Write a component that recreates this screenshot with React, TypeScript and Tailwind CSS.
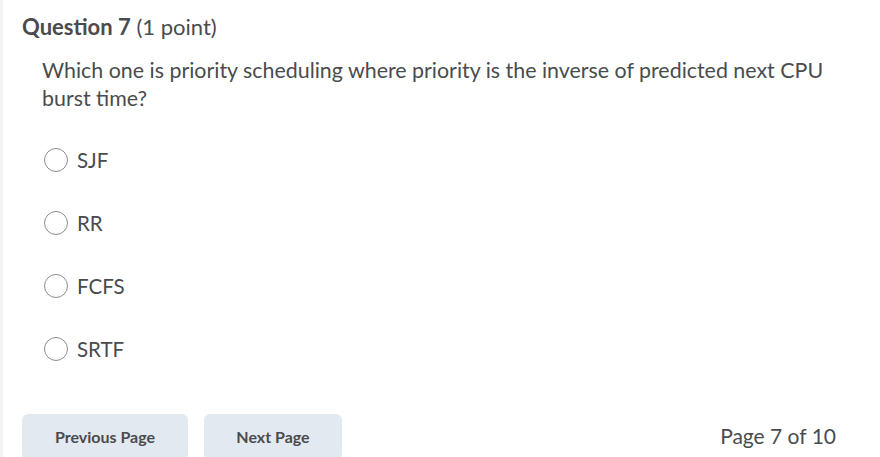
import React from "react";

const options = ["SJF", "RR", "FCFS", "SRTF"];

export default function App() {
    return (
        <div
            className="w-[880px] h-[457px] overflow-hidden bg-white text-[#494c4e] flex"
            style={{ fontFamily: "Lato, 'Noto Sans', sans-serif" }}
        >
            <div className="w-[3px] shrink-0 bg-[#f2f3f4]" />
            <div className="flex-1 flex flex-col pl-[19px] pr-[44px]">
                <h2 className="mt-[13px] text-[22px] leading-[28px]">
                    <span className="font-bold">Question 7</span> (1 point)
                </h2>

                <p className="mt-[15px] ml-[20px] text-[21.4px] leading-[28px]">
                    Which one is priority scheduling where priority is the inverse of predicted next CPU burst time?
                </p>

                <div className="mt-[36px] ml-[22px] flex flex-col gap-[39px]">
                    {options.map((opt) => (
                        <label key={opt} className="flex items-center gap-[9px] h-[24px]">
                            <span className="w-[24px] h-[24px] rounded-full border border-[#8a8d90] bg-white shrink-0" />
                            <span className="text-[20.5px] leading-[24px]">{opt}</span>
                        </label>
                    ))}
                </div>

                <div className="mt-[53px] flex items-start">
                    <button className="w-[166px] h-[46px] rounded-[6px] bg-[#e3e9f1] text-[16px] font-bold text-[#494c4e]">
                        Previous Page
                    </button>
                    <button className="ml-[16px] w-[138px] h-[46px] rounded-[6px] bg-[#e3e9f1] text-[16px] font-bold text-[#494c4e]">
                        Next Page
                    </button>
                    <span className="ml-auto mt-[8px] text-[21px] leading-[28px]">Page 7 of 10</span>
                </div>
            </div>
        </div>
    );
}
